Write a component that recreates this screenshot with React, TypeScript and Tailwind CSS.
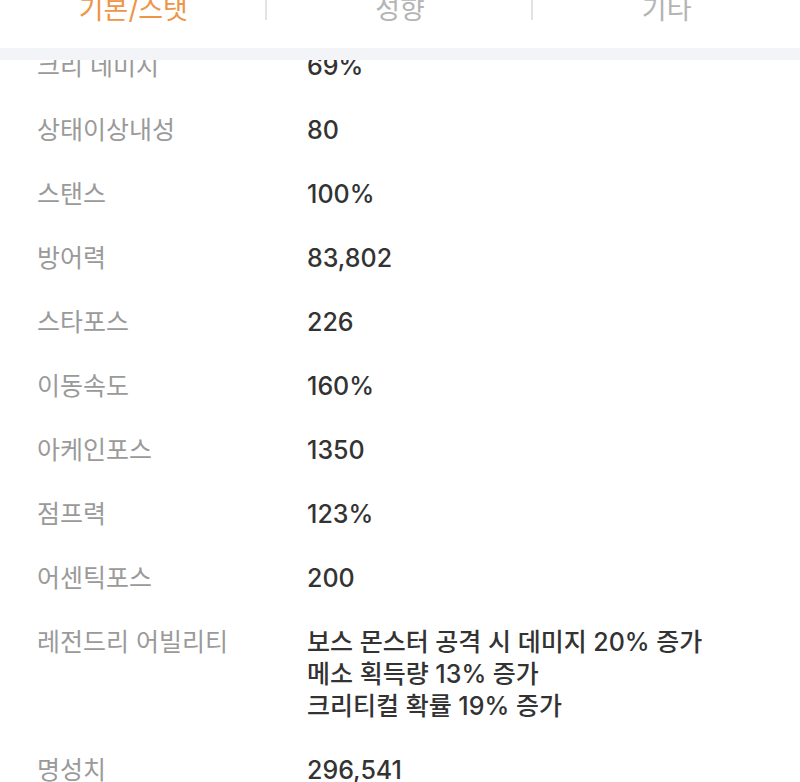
const rows: { label: string; value: string[] }[] = [
  { label: "크리 데미지", value: ["69%"] },
  { label: "상태이상내성", value: ["80"] },
  { label: "스탠스", value: ["100%"] },
  { label: "방어력", value: ["83,802"] },
  { label: "스타포스", value: ["226"] },
  { label: "이동속도", value: ["160%"] },
  { label: "아케인포스", value: ["1350"] },
  { label: "점프력", value: ["123%"] },
  { label: "어센틱포스", value: ["200"] },
  {
    label: "레전드리 어빌리티",
    value: ["보스 몬스터 공격 시 데미지 20% 증가", "메소 획득량 13% 증가", "크리티컬 확률 19% 증가"],
  },
  { label: "명성치", value: ["296,541"] },
];

const tabs = ["기본/스탯", "성향", "기타"];

export default function App() {
  return (
    <div
      className="w-[800px] h-[782px] overflow-hidden bg-white flex flex-col"
      style={{ fontFamily: 'Inter, "Noto Sans CJK KR", "Noto Sans", sans-serif' }}
    >
      {/* tabs */}
      <div className="h-[48px] shrink-0 bg-white overflow-hidden">
        <div className="flex -mt-[10px]">
          {tabs.map((t, i) => (
            <div key={t} className="flex-1 flex items-start relative">
              <div
                className={`w-full text-center text-[27px] leading-[40px] ${
                  i === 0 ? "text-[#ee9548]" : "text-[#b4b4b4]"
                }`}
              >
                {t}
              </div>
              {i < tabs.length - 1 && (
                <div className="absolute right-0 top-0 w-[2px] h-[30px] bg-[#e2e2e2]" />
              )}
            </div>
          ))}
        </div>
      </div>
      <div className="h-[12px] shrink-0 bg-[#f3f4f7]" />

      {/* stats */}
      <div className="flex-1 overflow-hidden">
        <div className="-mt-[26px]">
          {rows.map((r) => (
            <div key={r.label} className="flex py-[16px] leading-[32px]">
              <div className="w-[307px] pl-[37px] text-[25px] text-[#9a9a9a] shrink-0">{r.label}</div>
              <div className="text-[25px] text-[#333333] font-medium">
                {r.value.map((v) => (
                  <div key={v}>{v}</div>
                ))}
              </div>
            </div>
          ))}
        </div>
      </div>
    </div>
  );
}
